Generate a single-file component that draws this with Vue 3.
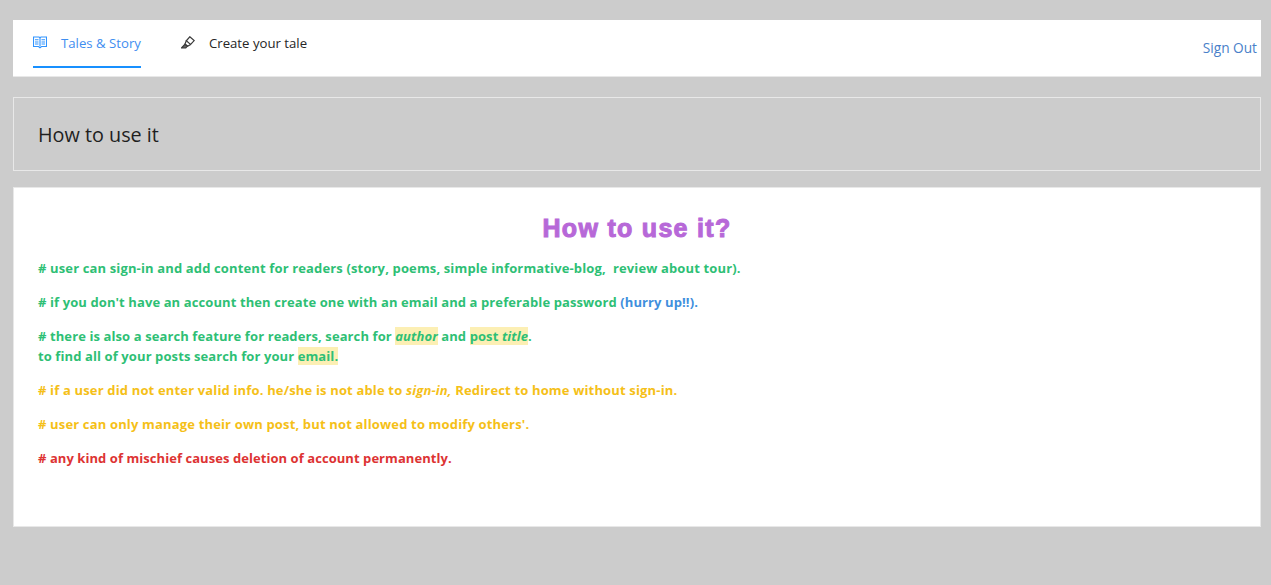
<template>
  <div class="page">
    <nav class="menu">
      <div class="tabs">
        <a class="tab active">
          <svg class="icon" viewBox="0 0 14 14" fill="none" stroke="#2f93ff" stroke-width="1.100">
            <path d="M.5 1h5.500L7 1.700 8 1h5.500v9.500H8.500L7 11.800l-1.500-1.300H.5z" />
            <path d="M7 1.700v8.800M2 3.800h3.500M2 6h3.500M2 8h3.500M8.500 3.800H12M8.500 6H12M8.500 8H12" />
          </svg>
          Tales &amp; Story
        </a>
        <a class="tab">
          <svg class="icon" viewBox="0 0 14 14" fill="none" stroke="#3a3a3a" stroke-width="1.200">
            <path d="M8.800 .8l4.400 3.800-3.600 3.900-4.300-3.700z" />
            <path d="M5.300 4.800L4 8l2.600 2.300 3-1.800" />
            <path d="M3.800 8.300L.6 11.800h4.200l1.500-1.600z" fill="#666" />
          </svg>
          Create your tale
        </a>
      </div>
      <a class="signout">Sign Out</a>
    </nav>

    <div class="page-head">How to use it</div>

    <section class="card">
      <h2>How to use it?</h2>
      <p class="green wide"># user can sign-in and add content for readers (story, poems, simple informative-blog, &nbsp;review about tour).</p>
      <p class="green"># if you don't have an account then create one with an email and a preferable password <span class="blue">(hurry up!!).</span></p>
      <p class="green">
        # there is also a search feature for readers, search for <mark><em>author</em></mark> and <mark>post <em>title</em></mark>.<br />
        to find all of your posts search for your <mark>email.</mark>
      </p>
      <p class="yellow"># if a user did not enter valid info. he/she is not able to <em>sign-in,</em> Redirect to home without sign-in.</p>
      <p class="yellow"># user can only manage their own post, but not allowed to modify others'.</p>
      <p class="red"># any kind of mischief causes deletion of account permanently.</p>
    </section>
  </div>
</template>

<script setup>
</script>

<style>
html,
body {
  background: #cccccc;
}
</style>

<style scoped>
.page {
  height: 585px;
  box-sizing: border-box;
  padding: 20px 10px 0 13px;
  font-family: "Open Sans", "Noto Sans", sans-serif;
  font-size: 13.2px;
  color: #262626;
  background: #cccccc;
}

.menu {
  display: flex;
  justify-content: space-between;
  height: 57px;
  box-sizing: border-box;
  padding: 0 4px 0 20px;
  background: #fff;
  border-bottom: 1px solid #e8e8e8;
}

.tabs {
  display: flex;
  gap: 40px;
}

.tab {
  display: flex;
  align-items: flex-start;
  gap: 14px;
  height: 48px;
  padding-top: 14px;
  box-sizing: border-box;
  line-height: 18px;
}

.tab.active {
  color: #3f8ef0;
  border-bottom: 2px solid #1890ff;
}

.icon {
  width: 14px;
  height: 14px;
  margin-top: 2px;
}

.signout {
  margin-top: 19px;
  font-size: 13.7px;
  line-height: 18px;
  color: #4a7fc9;
}

.page-head {
  height: 74px;
  box-sizing: border-box;
  margin-top: 20px;
  padding-left: 24px;
  border: 1px solid #e8e8e8;
  font-size: 19.8px;
  font-weight: 500;
  line-height: 74px;
  color: #1f1f1f;
}

.card {
  height: 340px;
  box-sizing: border-box;
  margin-top: 16px;
  padding: 24px 24px 0;
  background: #fff;
  border: 1px solid #e8e8e8;
}

h2 {
  margin: 0 0 14px;
  text-align: center;
  font-family: "Liberation Sans", Arial, sans-serif;
  font-size: 25px;
  line-height: 32px;
  font-weight: 700;
  color: #b768d8;
  -webkit-text-stroke: 1px #b768d8;
  letter-spacing: 1.300px;
}

p {
  margin: 0 0 14px;
  font-size: 13px;
  line-height: 20px;
  font-weight: 700;
}

mark {
  background: #fcefb4;
  color: inherit;
}

.green {
  color: #2ebf75;
  letter-spacing: 0.1px;
}

.green.wide {
  letter-spacing: 0.14px;
}

.blue {
  color: #3f8fdd;
}

.yellow {
  color: #f5c018;
  letter-spacing: 0.16px;
}

.red {
  color: #dd3333;
  letter-spacing: 0.06px;
}
</style>
